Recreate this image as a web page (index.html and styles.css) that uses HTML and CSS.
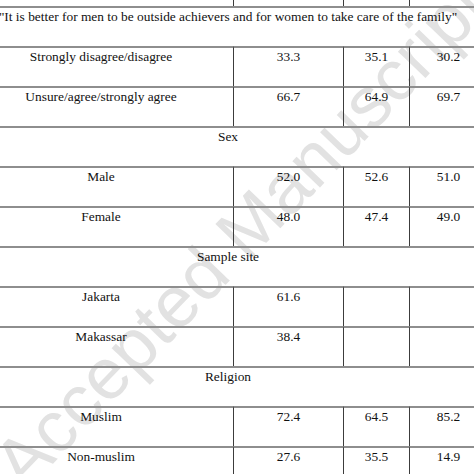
FILE: index.html
```html
<!DOCTYPE html>
<html>
<head>
<meta charset="utf-8">
<link rel="stylesheet" href="styles.css">
</head>
<body>
<div class="page">
  <div class="watermark">Accepted Manuscript</div>
  <table class="data">
    <colgroup>
      <col class="c-label">
      <col class="c-a">
      <col class="c-b">
      <col class="c-c">
    </colgroup>
    <tbody>
      <tr><td>&nbsp;</td><td class="num">&nbsp;</td><td class="num">&nbsp;</td><td class="num">&nbsp;</td></tr>
      <tr><td colspan="4" class="span">"It is better for men to be outside achievers and for women to take care of the family"</td></tr>
      <tr><td>Strongly disagree/disagree</td><td class="num">33.3</td><td class="num">35.1</td><td class="num">30.2</td></tr>
      <tr><td>Unsure/agree/strongly agree</td><td class="num">66.7</td><td class="num">64.9</td><td class="num">69.7</td></tr>
      <tr><td colspan="4" class="span">Sex</td></tr>
      <tr><td>Male</td><td class="num">52.0</td><td class="num">52.6</td><td class="num">51.0</td></tr>
      <tr><td>Female</td><td class="num">48.0</td><td class="num">47.4</td><td class="num">49.0</td></tr>
      <tr><td colspan="4" class="span">Sample site</td></tr>
      <tr><td>Jakarta</td><td class="num">61.6</td><td class="num">&nbsp;</td><td class="num">&nbsp;</td></tr>
      <tr><td>Makassar</td><td class="num">38.4</td><td class="num">&nbsp;</td><td class="num">&nbsp;</td></tr>
      <tr><td colspan="4" class="span">Religion</td></tr>
      <tr><td>Muslim</td><td class="num">72.4</td><td class="num">64.5</td><td class="num">85.2</td></tr>
      <tr><td>Non-muslim</td><td class="num">27.6</td><td class="num">35.5</td><td class="num">14.9</td></tr>
    </tbody>
  </table>
</div>
</body>
</html>
```
FILE: styles.css
```css
html, body {
  margin: 0;
  padding: 0;
  background: #ffffff;
}
.page {
  position: relative;
  width: 474px;
  height: 474px;
  overflow: hidden;
}
.watermark {
  position: absolute;
  left: 240px;
  top: 234px;
  transform: translate(-50%, -50%) rotate(-46deg);
  font-family: "Liberation Sans", Arial, sans-serif;
  font-size: 72px;
  color: #e2e2e2;
  white-space: nowrap;
  z-index: 0;
  pointer-events: none;
}
.data {
  position: relative;
  z-index: 1;
  margin-top: -34px;
  margin-left: -31px;
  border-collapse: separate;
  border-spacing: 0;
  table-layout: fixed;
  width: 518px;
  font-family: "Liberation Serif", "Times New Roman", serif;
  font-size: 13.4px;
  line-height: 15px;
  color: #111111;
}
.c-label { width: 264px; }
.c-a { width: 110px; }
.c-b { width: 66px; }
.c-c { width: 78px; }
.data td {
  height: 15px;
  border-top: 2px solid #8e8e8e;
  padding: 1px 0 22px 0;
  text-align: center;
  vertical-align: top;
  white-space: nowrap;
}
.data td.num {
  border-left: 1px solid #3c3c3c;
}
```
